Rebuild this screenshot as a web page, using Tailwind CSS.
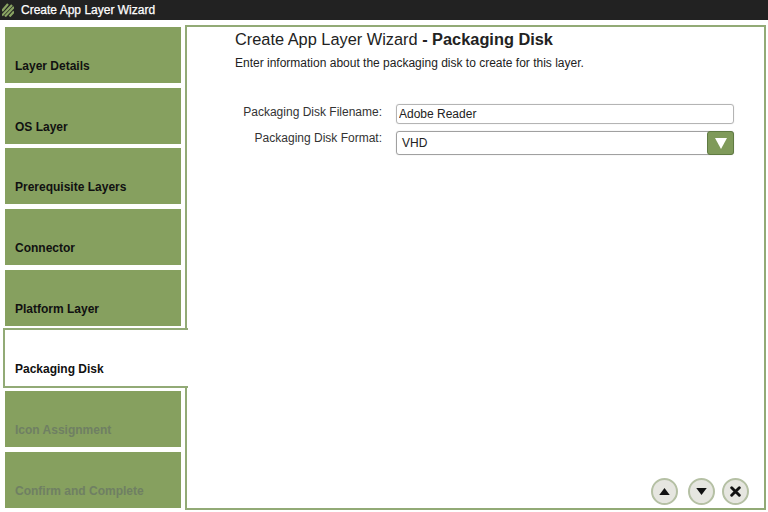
<!DOCTYPE html>
<html lang="en">
<head>
    <meta charset="UTF-8">
    <title>Create App Layer Wizard</title>
    <script src="https://cdn.jsdelivr.net/npm/@tailwindcss/browser@4"></script>
</head>
<body class="w-[768px] h-[512px] overflow-hidden bg-white font-['Liberation_Sans',Arial,sans-serif]">
    <header class="h-5 bg-[#222222] flex items-center pl-[2px] gap-[7px]">
        <svg width="12" height="14" viewBox="0 0 12 14" class="shrink-0">
            <path d="M0 8 L6 1 M0 12.5 L10 2 M3 13.5 L12 4 M7.5 13.5 L12 8.5" stroke="#8aa463" stroke-width="2.2" fill="none"/>
        </svg>
        <span class="text-[12px] text-white font-medium [-webkit-text-stroke:0.25px_#fff]">Create App Layer Wizard</span>
    </header>

    <div class="flex h-[492px] pt-[5px]">
        <nav class="w-[185px] shrink-0 pl-[5px] pt-[2px] flex flex-col gap-[4.7px]">
            <div class="w-[176px] h-[56px] bg-[#86a05f] flex items-end pl-[10px] pb-[8px] text-[12px] font-bold text-[#111]">Layer Details</div>
            <div class="w-[176px] h-[56px] bg-[#86a05f] flex items-end pl-[10px] pb-[8px] text-[12px] font-bold text-[#111]">OS Layer</div>
            <div class="w-[176px] h-[56px] bg-[#86a05f] flex items-end pl-[10px] pb-[8px] text-[12px] font-bold text-[#111]">Prerequisite Layers</div>
            <div class="w-[176px] h-[56px] bg-[#86a05f] flex items-end pl-[10px] pb-[8px] text-[12px] font-bold text-[#111]">Connector</div>
            <div class="w-[176px] h-[56px] bg-[#86a05f] flex items-end pl-[10px] pb-[8px] text-[12px] font-bold text-[#111]">Platform Layer</div>
            <div class="relative z-10 -ml-[2px] w-[185px] h-[60px] -my-[2px] bg-white border-2 border-r-0 border-[#92aa76] flex items-end pl-[10px] pb-[8px] text-[12px] font-bold text-[#111]">Packaging Disk</div>
            <div class="w-[176px] h-[56px] bg-[#86a05f] flex items-end pl-[10px] pb-[8px] text-[12px] font-bold text-[#6f7f63]">Icon Assignment</div>
            <div class="w-[176px] h-[56px] bg-[#86a05f] flex items-end pl-[10px] pb-[8px] text-[12px] font-bold text-[#6f7f63]">Confirm and Complete</div>
        </nav>

        <main class="w-[581px] h-[485px] border-2 border-[#92aa76] flex flex-col pl-[48px] pt-[2px] pr-[30px] pb-[3px]">
            <h1 class="text-[16.35px] leading-[20px] text-[#222]">Create App Layer Wizard <b class="font-bold">- Packaging Disk</b></h1>
            <p class="mt-[6px] text-[12px] leading-[16px] text-[#222]">Enter information about the packaging disk to create for this layer.</p>

            <div class="mt-[33px] flex flex-col gap-[7px]">
                <div class="flex items-start">
                    <label class="w-[147px] text-right text-[12px] leading-[14px] pt-[1px] text-[#333]">Packaging Disk Filename:</label>
                    <input value="Adobe Reader" class="ml-[14px] w-[338px] h-[20px] px-[2px] border border-[#b4b4b4] rounded-[3px] shadow-[0_0_1px_#c8c8c8] text-[12px] text-[#222]">
                </div>
                <div class="flex items-start">
                    <label class="w-[147px] text-right text-[12px] leading-[14px] text-[#333]">Packaging Disk Format:</label>
                    <div class="ml-[14px] w-[338px] h-[24px] border border-[#a0a0a0] rounded-[3px] shadow-[0_0_1px_#b8b8b8] flex justify-between items-center pl-[5px] text-[12px] text-[#222]">
                        VHD
                        <div class="w-[27px] h-[24px] -mr-px border border-[#5f7a42] bg-[#7f9a5a] rounded-[3px] flex items-center justify-center">
                            <svg width="12" height="11" viewBox="0 0 12 11"><path d="M0 0H12L6 11Z" fill="#fff"/></svg>
                        </div>
                    </div>
                </div>
            </div>

            <div class="mt-auto -mr-[15px] flex justify-end">
                <button class="w-[27px] h-[27px] rounded-full bg-[#e6e6e0] border-2 border-[#b5c0a4] flex items-center justify-center">
                    <svg width="11" height="7" viewBox="0 0 12 8"><path d="M6 0L12 8H0Z" fill="#111"/></svg>
                </button>
                <button class="ml-[10px] w-[27px] h-[27px] rounded-full bg-[#e6e6e0] border-2 border-[#b5c0a4] flex items-center justify-center">
                    <svg width="11" height="7" viewBox="0 0 12 8"><path d="M0 0H12L6 8Z" fill="#111"/></svg>
                </button>
                <button class="ml-[7px] w-[27px] h-[27px] rounded-full bg-[#e6e6e0] border-2 border-[#b5c0a4] flex items-center justify-center">
                    <svg width="11" height="11" viewBox="0 0 13 13"><path d="M2 2L11 11M11 2L2 11" stroke="#111" stroke-width="3.4" stroke-linecap="round"/></svg>
                </button>
            </div>
        </main>
    </div>
</body>
</html>
